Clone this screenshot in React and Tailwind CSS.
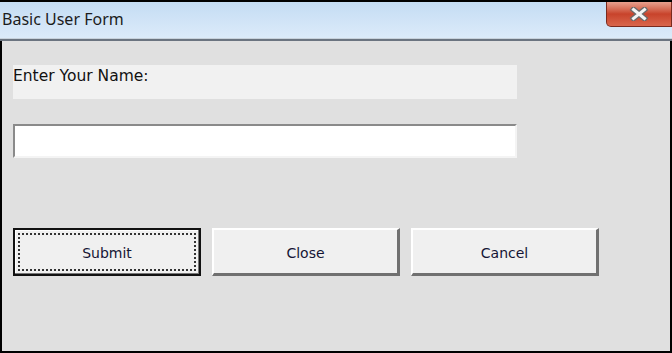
import React from "react";

const CloseGlyph = () => (
  <svg width="20" height="14" viewBox="0 0 20 14">
    <path
      d="M4.5 2.5 L15.5 11.5 M15.5 2.5 L4.5 11.5"
      stroke="#6a6a6a"
      strokeWidth="5.5"
      strokeLinecap="square"
      fill="none"
    />
    <path
      d="M4.5 2.5 L15.5 11.5 M15.5 2.5 L4.5 11.5"
      stroke="#f4f4f4"
      strokeWidth="3"
      strokeLinecap="square"
      fill="none"
    />
  </svg>
);

const FormButton = ({ label, focused }) => (
  <button
    className={
      focused
        ? "w-[188px] h-[48px] bg-[#f0f0f0] border-2 border-[#111] p-[3px] shadow-[inset_-1px_-1px_0_#777,inset_1px_1px_0_#fff]"
        : "w-[188px] h-[48px] bg-[#f0f0f0] border-t-2 border-l-2 border-b-[3px] border-r-[3px] border-t-white border-l-white border-b-[#707070] border-r-[#707070]"
    }
  >
    {focused ? (
      <span className="flex w-full h-full items-center justify-center pt-[2px] border-2 border-dotted border-[#333] text-[14px] text-[#151535]">
        {label}
      </span>
    ) : (
      <span className="flex w-full h-full items-center justify-center pt-[3px] text-[14px] text-[#151535]">
        {label}
      </span>
    )}
  </button>
);

export default function App() {
  return (
    <div
      className="w-[672px] h-[353px] flex flex-col bg-black pt-[2px] overflow-hidden"
      style={{ fontFamily: '"DejaVu Sans", "Liberation Sans", sans-serif' }}
    >
      {/* title bar */}
      <div className="relative h-[36px] flex items-center bg-gradient-to-b from-[#c4dcf3] to-[#dcebfa] pl-[2px]">
        <span
          className="text-[16px] text-[#1c1c1c] -mt-[2px]"
          style={{ fontFamily: '"Noto Sans", "Open Sans", sans-serif' }}
        >
          Basic User Form
        </span>
        <div className="absolute right-0 top-0 w-[66px] h-[25px] rounded-bl-[5px] border border-t-0 border-[#7a2a1e] bg-gradient-to-b from-[#e7a08e] via-[#c8432b] to-[#d9664c] flex items-center justify-center">
          <CloseGlyph />
        </div>
      </div>
      <div className="h-[1px] bg-[#c8d2dc]" />
      <div className="h-[2px] bg-[#6b7480]" />

      {/* body */}
      <div className="flex-1 flex flex-col mx-[2px] mb-[2px] bg-[#e0e0e0] pl-[11px]">
        <div className="mt-[24px] w-[504px] h-[34px] bg-[#f1f1f1] pt-[1px] text-[15.5px] leading-[20px] text-[#111]">
          Enter Your Name:
        </div>
        <div className="mt-[25px] w-[504px] h-[34px] bg-white border-t-2 border-l-2 border-b-2 border-r-2 border-t-[#8a8a8a] border-l-[#8a8a8a] border-b-[#f4f4f4] border-r-[#f4f4f4]" />
        <div className="mt-[70px] flex gap-[11px]">
          <FormButton label="Submit" focused />
          <FormButton label="Close" />
          <FormButton label="Cancel" />
        </div>
      </div>
    </div>
  );
}
